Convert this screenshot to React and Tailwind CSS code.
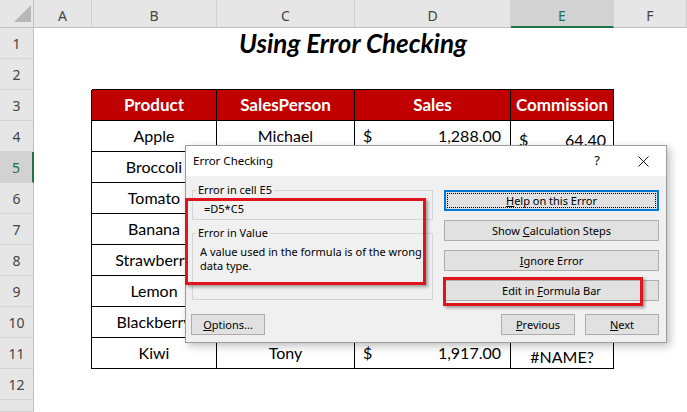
import React from "react";

const COLS = [
  { k: "A", w: "w-[58px]" },
  { k: "B", w: "w-[125px]" },
  { k: "C", w: "w-[138px]" },
  { k: "D", w: "w-[156px]" },
  { k: "E", w: "w-[103px]" },
  { k: "F", w: "w-[73px]" },
];

const DATA = {
  4: ["Apple", "Michael", "1,288.00", "64.40"],
  5: ["Broccoli", "", "", ""],
  6: ["Tomato", "", "", ""],
  7: ["Banana", "", "", ""],
  8: ["Strawberry", "", "", ""],
  9: ["Lemon", "", "", ""],
  10: ["Blackberry", "", "", ""],
  11: ["Kiwi", "Tony", "1,917.00", "#NAME?"],
};

function RowHead({ n, h = "h-[31px]", label = true }) {
  const sel = n === 5;
  return (
    <div
      className={`${h} w-[34px] shrink-0 flex items-center justify-center border-b border-b-[#d4d4d4] font-['Noto_Sans',sans-serif] text-[14px] ${
        sel
          ? "bg-[#d2d2d2] text-[#217346] border-r-2 border-r-[#217346]"
          : "bg-[#e6e6e6] text-[#444] border-r border-r-[#bfbfbf]"
      }`}
    >
      {label ? n : null}
    </div>
  );
}

function ColHeader() {
  return (
    <div className="flex h-[28px]">
      <div className="w-[34px] h-[28px] shrink-0 bg-[#e6e6e6] border-r border-b border-[#bfbfbf] flex items-end justify-end pr-[2px] pb-[5px]">
        <svg width="17" height="17" viewBox="0 0 17 17">
          <polygon points="0,17 17,0 17,17" fill="#b7b7b7" />
        </svg>
      </div>
      {COLS.map((c) => {
        const sel = c.k === "E";
        return (
          <div
            key={c.k}
            className={`${c.w} h-[28px] shrink-0 flex items-center justify-center pt-[4px] border-r border-r-[#d0d0d0] font-['Noto_Sans',sans-serif] text-[14px] ${
              sel
                ? "bg-[#d2d2d2] text-[#217346] border-b-2 border-b-[#217346]"
                : "bg-[#e6e6e6] text-[#444] border-b border-b-[#bfbfbf]"
            }`}
          >
            {c.k}
          </div>
        );
      })}
    </div>
  );
}

function DataRow({ n }) {
  const d = DATA[n];
  const isErr = d[3] === "#NAME?";
  const hasNum = d[2] !== "";
  return (
    <div className="flex h-[31px]">
      <RowHead n={n} />
      <div className="w-[58px] shrink-0 border-r border-black" />
      <div className="w-[125px] shrink-0 border-r border-b border-black flex items-center justify-center text-[16px]">
        {d[0]}
      </div>
      <div className="w-[138px] shrink-0 border-r border-b border-black flex items-center justify-center text-[16px]">
        {d[1]}
      </div>
      <div className="w-[156px] shrink-0 border-r border-b border-black flex items-center justify-between pl-[8px] pr-[9px] text-[16px]">
        {hasNum ? (
          <>
            <span>$</span>
            <span>{d[2]}</span>
          </>
        ) : null}
      </div>
      <div
        className={`w-[103px] shrink-0 border-r border-b border-black flex items-end pb-[3px] leading-[16px] text-[16px] ${
          isErr ? "justify-center" : "justify-between pl-[8px] pr-[7px]"
        }`}
      >
        {isErr ? (
          <span>{d[3]}</span>
        ) : d[3] ? (
          <>
            <span>$</span>
            <span>{d[3]}</span>
          </>
        ) : null}
      </div>
      <div className="w-[73px] shrink-0" />
    </div>
  );
}

function Btn({ children, className = "", focus = false }) {
  if (focus) {
    return (
      <div className={`h-[21px] bg-[#e1e1e1] border-2 border-[#0078d7] flex p-[1px] ${className}`}>
        <div className="flex-1 border border-dotted border-black flex items-center justify-center leading-none">
          {children}
        </div>
      </div>
    );
  }
  return (
    <div
      className={`h-[21px] bg-[#e1e1e1] border border-[#adadad] flex items-center justify-center leading-none ${className}`}
    >
      {children}
    </div>
  );
}

function Dialog() {
  return (
    <div className="absolute left-[185px] top-[145px] w-[482px] h-[198px] border border-[#9c9c9c] bg-[#f0f0f0] shadow-[3px_3px_8px_rgba(0,0,0,0.25)] font-['Noto_Sans',sans-serif] text-[11px] text-black">
      <div className="h-[30px] bg-white flex items-center">
        <span className="pl-[7px] text-[11.5px]">Error Checking</span>
        <div className="ml-auto w-[46px] h-full flex items-center justify-center text-[13px]">?</div>
        <div className="w-[46px] h-full flex items-center justify-center">
          <svg width="11" height="11" viewBox="0 0 11 11">
            <path d="M0.5 0.5 L10.5 10.5 M10.5 0.5 L0.5 10.5" stroke="#111" strokeWidth="1" />
          </svg>
        </div>
      </div>
      <div className="flex gap-[11px] pl-[6px] pr-[7px] pt-[6px] items-start">
        <div className="w-[241px] shrink-0">
          <fieldset className="border border-[#d5d5d5]">
            <legend className="ml-[3px] px-[2px] leading-[16px]">Error in cell E5</legend>
            <div className="h-[21px] pl-[11px] pt-[4px] leading-[14px]">=D5*C5</div>
          </fieldset>
          <fieldset className="border border-[#d5d5d5] mt-[5px]">
            <legend className="ml-[3px] px-[2px] leading-[16px]">Error in Value</legend>
            <div className="h-[58px] pl-[7px] pt-[4px] leading-[13.5px]">
              A value used in the formula is of the wrong
              <br />
              data type.
            </div>
          </fieldset>
        </div>
        <div className="w-[215px] shrink-0 mt-[8px] flex flex-col gap-[9px]">
          <Btn focus>
            <span>
              <u>H</u>elp on this Error
            </span>
          </Btn>
          <Btn>
            <span>
              Show <u>C</u>alculation Steps
            </span>
          </Btn>
          <Btn>
            <span>
              <u>I</u>gnore Error
            </span>
          </Btn>
          <Btn>
            <span>
              Edit in <u>F</u>ormula Bar
            </span>
          </Btn>
        </div>
      </div>
      <div className="flex mt-[13px] pl-[5px] pr-[7px] gap-[10px]">
        <Btn className="w-[74px]">
          <span>
            <u>O</u>ptions...
          </span>
        </Btn>
        <Btn className="w-[74px] ml-auto">
          <span>
            <u>P</u>revious
          </span>
        </Btn>
        <Btn className="w-[74px]">
          <span>
            <u>N</u>ext
          </span>
        </Btn>
      </div>
      <div className="absolute left-[-1px] top-[52px] w-[241px] h-[87px] border-[3px] border-[#e0151b] shadow-[2px_2px_3px_rgba(0,0,0,0.35)]" />
      <div className="absolute left-[257px] top-[131px] w-[200px] h-[29px] border-[3px] border-[#e0151b] shadow-[2px_2px_3px_rgba(0,0,0,0.35)]" />
    </div>
  );
}

export default function App() {
  return (
    <div className="w-[687px] h-[412px] overflow-hidden relative bg-white text-black font-['Lato',sans-serif]">
      <ColHeader />
      <div className="flex h-[31px]">
        <RowHead n={1} />
        <div className="w-[58px] shrink-0" />
        <div className="w-[522px] shrink-0 flex items-center justify-center text-[26px] font-bold italic">
          Using Error Checking
        </div>
        <div className="w-[73px] shrink-0" />
      </div>
      <div className="flex h-[31px]">
        <RowHead n={2} />
        <div className="w-[58px] shrink-0" />
        <div className="w-[522px] shrink-0 border-b border-black" />
        <div className="w-[73px] shrink-0" />
      </div>
      <div className="flex h-[31px]">
        <RowHead n={3} />
        <div className="w-[58px] shrink-0 border-r border-black" />
        {["Product", "SalesPerson", "Sales", "Commission"].map((t, i) => (
          <div
            key={t}
            className={`${["w-[125px]", "w-[138px]", "w-[156px]", "w-[103px]"][i]} shrink-0 bg-[#c00000] border-r border-b border-black flex items-center justify-center text-white font-bold text-[17px]`}
          >
            {t}
          </div>
        ))}
        <div className="w-[73px] shrink-0" />
      </div>
      {[4, 5, 6, 7, 8, 9, 10, 11].map((n) => (
        <DataRow key={n} n={n} />
      ))}
      <div className="flex h-[31px]">
        <RowHead n={12} />
      </div>
      <div className="flex h-[12px]">
        <RowHead n={13} h="h-[12px]" label={false} />
      </div>
      <Dialog />
    </div>
  );
}
